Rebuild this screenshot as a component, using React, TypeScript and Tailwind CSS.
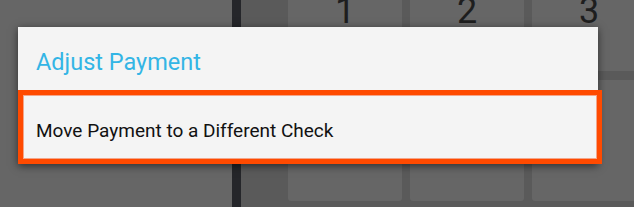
export default function App() {
  const keys = ["1", "2", "3", "", "", ""];

  return (
    <div className="relative w-[634px] h-[207px] overflow-hidden bg-[#5a5a5a] font-['Roboto',sans-serif]">
      {/* dimmed screen behind the dialog */}
      <div className="flex h-full">
        <div className="w-[232px] shrink-0 bg-[#666666]" />
        <div className="w-[9px] shrink-0 bg-[#25262a]" />
        <div className="flex-1 min-w-0 overflow-hidden bg-[#5a5a5a] pl-[47px]">
          <div className="grid grid-cols-[114px_114px_114px] gap-x-[8px] gap-y-[9px] mt-[-50px]">
            {keys.map((k, i) => (
              <div
                key={i}
                className="h-[121px] rounded-[3px] bg-[#666666] flex items-center justify-center text-[36px] leading-none text-[#1e1e1e]"
              >
                {k}
              </div>
            ))}
          </div>
        </div>
      </div>

      {/* Dialog */}
      <div className="absolute left-[18px] top-[27px] w-[580px] bg-[#f4f4f4] shadow-[0_2px_8px_rgba(0,0,0,0.55)]">
        <div className="h-[63px] flex items-center pl-[18px] pt-[8px] text-[23.5px] text-[#33b5e5]">
          Adjust Payment
        </div>
        <div className="w-[584px] h-[74px] border-[5px] border-[#ff4a00] bg-[#f4f4f4] flex items-center pl-[13px] pt-[8px] text-[19px] text-[#111111] shadow-[inset_0_0_0_1px_#f3a58a]">
          Move Payment to a Different Check
        </div>
      </div>
    </div>
  );
}
